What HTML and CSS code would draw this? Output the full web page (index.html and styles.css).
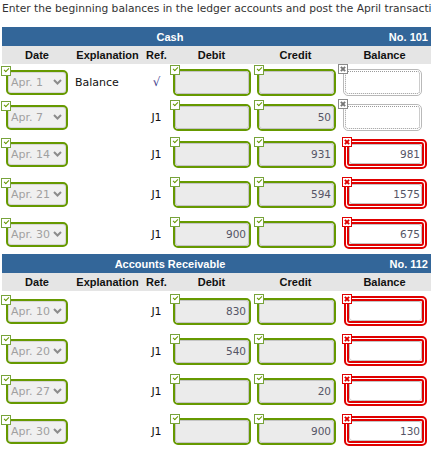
FILE: index.html
```html
<!DOCTYPE html>
<html lang="en">
  <head>
    <meta charset="UTF-8" />
    <title>Ledger accounts</title>
    <link rel="stylesheet" href="styles.css">
  </head>
  <body>
    <p class="intro">Enter the beginning balances in the ledger accounts and post the April transactions.</p>

    <!-- Cash -->
    <div class="ledger">
      <div class="bar">
        <span class="bar-title">Cash</span>
        <span class="bar-no">No. 101</span>
      </div>
      <div class="cols">
        <span>Date</span><span>Explanation</span><span>Ref.</span><span>Debit</span><span>Credit</span><span>Balance</span>
      </div>

      <div class="row first">
        <div class="c-date"><div class="pick ok"><i class="badge ok"></i><span>Apr. 1</span><svg width="9" height="6" viewBox="0 0 9 6"><polyline points="1,1 4.5,4.5 8,1" /></svg></div></div>
        <div class="c-expl">Balance</div>
        <div class="c-ref tick">√</div>
        <div class="c-debit"><div class="field ok"><i class="badge ok"></i><div class="inp"></div></div></div>
        <div class="c-credit"><div class="field ok"><i class="badge ok"></i><div class="inp"></div></div></div>
        <div class="c-bal"><div class="field none"><i class="badge none"></i><div class="inp"></div></div></div>
      </div>

      <div class="row short">
        <div class="c-date"><div class="pick ok"><i class="badge ok"></i><span>Apr. 7</span><svg width="9" height="6" viewBox="0 0 9 6"><polyline points="1,1 4.5,4.5 8,1" /></svg></div></div>
        <div class="c-expl"></div>
        <div class="c-ref">J1</div>
        <div class="c-debit"><div class="field ok"><i class="badge ok"></i><div class="inp"></div></div></div>
        <div class="c-credit"><div class="field ok"><i class="badge ok"></i><div class="inp">50</div></div></div>
        <div class="c-bal"><div class="field none"><i class="badge none"></i><div class="inp"></div></div></div>
      </div>

      <div class="row">
        <div class="c-date"><div class="pick ok"><i class="badge ok"></i><span>Apr. 14</span><svg width="9" height="6" viewBox="0 0 9 6"><polyline points="1,1 4.5,4.5 8,1" /></svg></div></div>
        <div class="c-expl"></div>
        <div class="c-ref">J1</div>
        <div class="c-debit"><div class="field ok"><i class="badge ok"></i><div class="inp"></div></div></div>
        <div class="c-credit"><div class="field ok"><i class="badge ok"></i><div class="inp">931</div></div></div>
        <div class="c-bal"><div class="field bad"><i class="badge bad"></i><div class="ring"><div class="inp">981</div></div></div></div>
      </div>

      <div class="row">
        <div class="c-date"><div class="pick ok"><i class="badge ok"></i><span>Apr. 21</span><svg width="9" height="6" viewBox="0 0 9 6"><polyline points="1,1 4.5,4.5 8,1" /></svg></div></div>
        <div class="c-expl"></div>
        <div class="c-ref">J1</div>
        <div class="c-debit"><div class="field ok"><i class="badge ok"></i><div class="inp"></div></div></div>
        <div class="c-credit"><div class="field ok"><i class="badge ok"></i><div class="inp">594</div></div></div>
        <div class="c-bal"><div class="field bad"><i class="badge bad"></i><div class="ring"><div class="inp">1575</div></div></div></div>
      </div>

      <div class="row">
        <div class="c-date"><div class="pick ok"><i class="badge ok"></i><span>Apr. 30</span><svg width="9" height="6" viewBox="0 0 9 6"><polyline points="1,1 4.5,4.5 8,1" /></svg></div></div>
        <div class="c-expl"></div>
        <div class="c-ref">J1</div>
        <div class="c-debit"><div class="field ok"><i class="badge ok"></i><div class="inp">900</div></div></div>
        <div class="c-credit"><div class="field ok"><i class="badge ok"></i><div class="inp"></div></div></div>
        <div class="c-bal"><div class="field bad"><i class="badge bad"></i><div class="ring"><div class="inp">675</div></div></div></div>
      </div>
    </div>

    <!-- Accounts Receivable -->
    <div class="ledger">
      <div class="bar">
        <span class="bar-title">Accounts Receivable</span>
        <span class="bar-no">No. 112</span>
      </div>
      <div class="cols">
        <span>Date</span><span>Explanation</span><span>Ref.</span><span>Debit</span><span>Credit</span><span>Balance</span>
      </div>

      <div class="row">
        <div class="c-date"><div class="pick ok"><i class="badge ok"></i><span>Apr. 10</span><svg width="9" height="6" viewBox="0 0 9 6"><polyline points="1,1 4.5,4.5 8,1" /></svg></div></div>
        <div class="c-expl"></div>
        <div class="c-ref">J1</div>
        <div class="c-debit"><div class="field ok"><i class="badge ok"></i><div class="inp">830</div></div></div>
        <div class="c-credit"><div class="field ok"><i class="badge ok"></i><div class="inp"></div></div></div>
        <div class="c-bal"><div class="field bad"><i class="badge bad"></i><div class="ring"><div class="inp"></div></div></div></div>
      </div>

      <div class="row">
        <div class="c-date"><div class="pick ok"><i class="badge ok"></i><span>Apr. 20</span><svg width="9" height="6" viewBox="0 0 9 6"><polyline points="1,1 4.5,4.5 8,1" /></svg></div></div>
        <div class="c-expl"></div>
        <div class="c-ref">J1</div>
        <div class="c-debit"><div class="field ok"><i class="badge ok"></i><div class="inp">540</div></div></div>
        <div class="c-credit"><div class="field ok"><i class="badge ok"></i><div class="inp"></div></div></div>
        <div class="c-bal"><div class="field bad"><i class="badge bad"></i><div class="ring"><div class="inp"></div></div></div></div>
      </div>

      <div class="row">
        <div class="c-date"><div class="pick ok"><i class="badge ok"></i><span>Apr. 27</span><svg width="9" height="6" viewBox="0 0 9 6"><polyline points="1,1 4.5,4.5 8,1" /></svg></div></div>
        <div class="c-expl"></div>
        <div class="c-ref">J1</div>
        <div class="c-debit"><div class="field ok"><i class="badge ok"></i><div class="inp"></div></div></div>
        <div class="c-credit"><div class="field ok"><i class="badge ok"></i><div class="inp">20</div></div></div>
        <div class="c-bal"><div class="field bad"><i class="badge bad"></i><div class="ring"><div class="inp"></div></div></div></div>
      </div>

      <div class="row">
        <div class="c-date"><div class="pick ok"><i class="badge ok"></i><span>Apr. 30</span><svg width="9" height="6" viewBox="0 0 9 6"><polyline points="1,1 4.5,4.5 8,1" /></svg></div></div>
        <div class="c-expl"></div>
        <div class="c-ref">J1</div>
        <div class="c-debit"><div class="field ok"><i class="badge ok"></i><div class="inp"></div></div></div>
        <div class="c-credit"><div class="field ok"><i class="badge ok"></i><div class="inp">900</div></div></div>
        <div class="c-bal"><div class="field bad"><i class="badge bad"></i><div class="ring"><div class="inp">130</div></div></div></div>
      </div>
    </div>
  </body>
</html>
```

FILE: styles.css
```css
* {
  margin: 0;
  padding: 0;
  box-sizing: border-box;
}
html,
body {
  overflow: hidden;
  background: #ffffff;
  font-family: "DejaVu Sans", Verdana, sans-serif;
  font-size: 11px;
  color: #222222;
}
.intro {
  white-space: nowrap;
  padding: 2px 0 0 2px;
  font-size: 10.7px;
  line-height: 13px;
  height: 27px;
  color: #333333;
}
/* ledger table */
.ledger {
  margin-left: 2px;
  width: 429px;
}
.bar,
.cols,
.row {
  display: grid;
  grid-template-columns: 70px 71px 27px 83px 85px 93px;
}
.bar {
  background: #336699;
  color: #ffffff;
  height: 19px;
  align-items: center;
  font-family: "Liberation Sans", Tahoma, sans-serif;
  font-weight: bold;
  font-size: 11px;
}
.bar-title {
  grid-column: 1 / 6;
  text-align: center;
}
.bar-no {
  text-align: right;
  padding-right: 3px;
}
.cols {
  background: #e5e5e5;
  height: 18px;
  align-items: center;
  font-family: "Liberation Sans", Tahoma, sans-serif;
  font-weight: bold;
  font-size: 11px;
  color: #111111;
  text-align: center;
}
.row {
  height: 40px;
  align-items: center;
}
.row.first {
  height: 36px;
}
.row.short {
  height: 34px;
}
.c-expl {
  padding-left: 3px;
  color: #111111;
}
.c-ref {
  text-align: center;
  color: #111111;
}
.c-ref.tick {
  color: #3a3a8a;
  font-size: 12px;
}
.c-date .pick {
  margin-left: 4px;
  width: 62px;
}
.c-debit .field {
  margin-left: 3px;
  width: 78px;
}
.c-credit .field {
  margin-left: 4px;
  width: 79px;
}
.c-bal .field {
  margin-left: 6px;
  width: 83px;
}
.c-bal .field.none {
  margin-left: 5px;
  width: 79px;
}
/* date picker */
.pick {
  position: relative;
  height: 25px;
  border: 2px solid #669900;
  border-radius: 5px;
  display: flex;
  align-items: center;
  justify-content: space-between;
  padding: 0 4px 0 3px;
  background: #f0f0f0;
  box-shadow: inset 0 0 0 1px #d6d6d6;
  color: #a0a0a0;
}
.pick svg polyline {
  fill: none;
  stroke: #8c8c8c;
  stroke-width: 2;
}
/* input boxes */
.field {
  position: relative;
  height: 27px;
  border: 2px solid #669900;
  border-radius: 5px;
}
.inp {
  height: 100%;
  border: 1px solid #c4c4c4;
  border-radius: 3px;
  background: #ebebeb;
  text-align: right;
  padding-right: 2px;
  line-height: 21px;
  font-size: 10.5px;
  color: #555566;
}
.field.none {
  border: 1px solid #b9b9b9;
  padding: 1px;
}
.field.none .inp {
  background: #ffffff;
  border: 1px dotted #9a9a9a;
}
.field.bad {
  height: 30px;
  border-color: #e00000;
  padding: 1px;
}
.ring {
  height: 100%;
  border: 2px solid #e00000;
  border-radius: 3px;
}
.field.bad .inp {
  background: #ffffff;
  line-height: 18px;
  padding-right: 1px;
}
/* status badges */
.badge {
  position: absolute;
  top: -6px;
  left: -5px;
  width: 10px;
  height: 10px;
  background: #ffffff;
  border: 1px solid #77a33a;
  z-index: 1;
}
.pick .badge {
  top: -6px;
  left: -7px;
}
.badge.ok::after {
  content: "";
  position: absolute;
  left: 2px;
  top: 1.5px;
  width: 4px;
  height: 2px;
  border-left: 1.5px solid #669900;
  border-bottom: 1.5px solid #669900;
  transform: rotate(-45deg);
}
.badge.none {
  border-color: #8a8a8a;
  left: -6px;
}
.badge.bad {
  border-color: #e00000;
  top: -4px;
  left: -4px;
}
.badge.none::before,
.badge.none::after,
.badge.bad::before,
.badge.bad::after {
  content: "";
  position: absolute;
  left: 1px;
  top: 3px;
  width: 6px;
  height: 2px;
  background: #777777;
  transform: rotate(45deg);
}
.badge.none::after,
.badge.bad::after {
  transform: rotate(-45deg);
}
.badge.bad::before,
.badge.bad::after {
  background: #e00000;
}
```
